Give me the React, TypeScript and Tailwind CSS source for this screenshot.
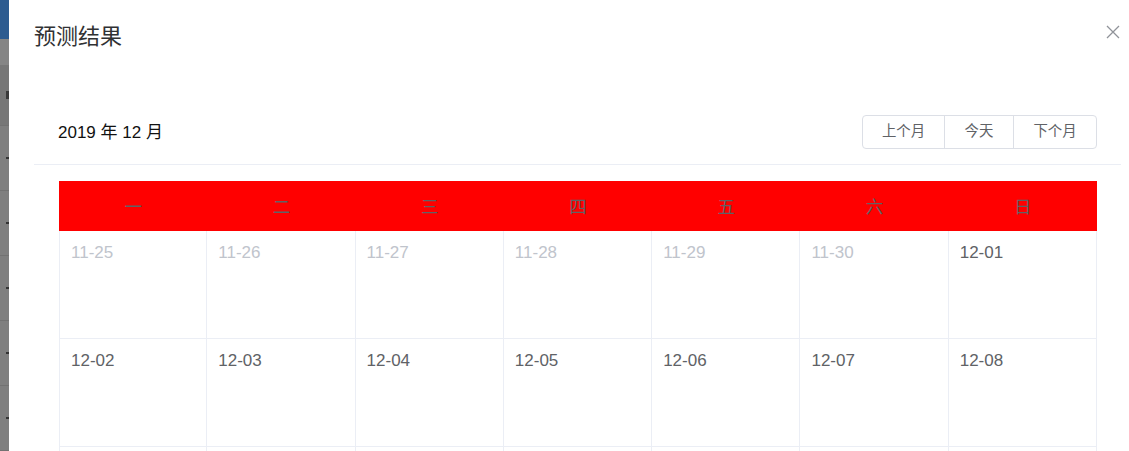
const prevDays = ['11-25', '11-26', '11-27', '11-28', '11-29', '11-30']
const weekLabels = ['一', '二', '三', '四', '五', '六', '日']

const rows: { label: string; current: boolean }[][] = [
  [...prevDays.map((d) => ({ label: d, current: false })), { label: '12-01', current: true }],
  ['12-02', '12-03', '12-04', '12-05', '12-06', '12-07', '12-08'].map((d) => ({ label: d, current: true })),
]

const font = "font-['Liberation_Sans','Noto_Sans_CJK_SC',sans-serif]"

function BackdropStrip() {
  const rowMarks = [0, 1, 2, 3, 4, 5]
  return (
    <div className="w-[9px] shrink-0 flex flex-col bg-[#7f7f7f] overflow-hidden">
      <div className="h-[39px] shrink-0 bg-[#2c5b90]" />
      <div className="h-[26px] shrink-0 bg-[#858585]" />
      <div className="h-[60px] shrink-0 bg-[#777777] flex items-center justify-end">
        <div className="w-[3px] h-[8px] bg-[#3a3a3a]" />
      </div>
      {rowMarks.map((i) => (
        <div key={i} className="h-[65px] shrink-0 border-t border-[#727272] flex items-center justify-end">
          <div className="w-[3px] h-[2px] bg-[#333333]" />
        </div>
      ))}
    </div>
  )
}

function CloseIcon() {
  return (
    <svg width="14" height="14" viewBox="0 0 14 14" fill="none">
      <path d="M1 1L13 13M13 1L1 13" stroke="#909399" strokeWidth="1.3" />
    </svg>
  )
}

export default function App() {
  return (
    <div className={`w-[1129px] h-[451px] overflow-hidden flex ${font}`}>
      <BackdropStrip />
      <div className="relative w-[1134px] shrink-0 bg-white">
        <div className="pl-[25px] pt-[22px] pb-[12px]">
          <span className="text-[22px] leading-[29px] text-[#303133]">预测结果</span>
        </div>
        <button className="absolute left-[1097px] top-[25px] p-0">
          <CloseIcon />
        </button>

        <div className="pl-[25px] pt-[38px]">
          <div className="w-[1087px]">
            <div className="flex items-center justify-between px-[24px] pt-[14px] pb-[15px] border-b border-[#ebeef5]">
              <span className="text-[17px] leading-[22px] pt-[2px] text-[#111111]">2019 年 12 月</span>
              <div className="flex h-[34px] rounded-[4px] border border-[#dcdfe6] text-[14.4px] text-[#606266]">
                <button className="w-[82px] border-r border-[#dcdfe6]">上个月</button>
                <button className="w-[69px] border-r border-[#dcdfe6]">今天</button>
                <button className="w-[82px]">下个月</button>
              </div>
            </div>

            <div className="pl-[25px] pr-[24px] pt-[16px]">
              <div className="grid grid-cols-7 h-[50px] bg-[#ff0000]">
                {weekLabels.map((w) => (
                  <div key={w} className="flex items-center justify-center pt-[2px] text-[17.5px] text-[#606266]">
                    {w}
                  </div>
                ))}
              </div>
              {rows.map((row, ri) => (
                <div key={ri} className="grid grid-cols-7">
                  {row.map((cell, ci) => (
                    <div
                      key={cell.label}
                      className={`h-[108px] border-r border-b border-[#ebeef5] pl-[11px] pt-[10px] ${
                        ci === 0 ? 'border-l' : ''
                      }`}
                    >
                      <span
                        className={`text-[17px] leading-[20px] ${
                          cell.current ? 'text-[#606266]' : 'text-[#c0c4cc]'
                        }`}
                      >
                        {cell.label}
                      </span>
                    </div>
                  ))}
                </div>
              ))}
              <div className="grid grid-cols-7">
                {weekLabels.map((w, ci) => (
                  <div
                    key={w}
                    className={`h-[108px] border-r border-b border-[#ebeef5] ${ci === 0 ? 'border-l' : ''}`}
                  />
                ))}
              </div>
            </div>
          </div>
        </div>
      </div>
    </div>
  )
}
